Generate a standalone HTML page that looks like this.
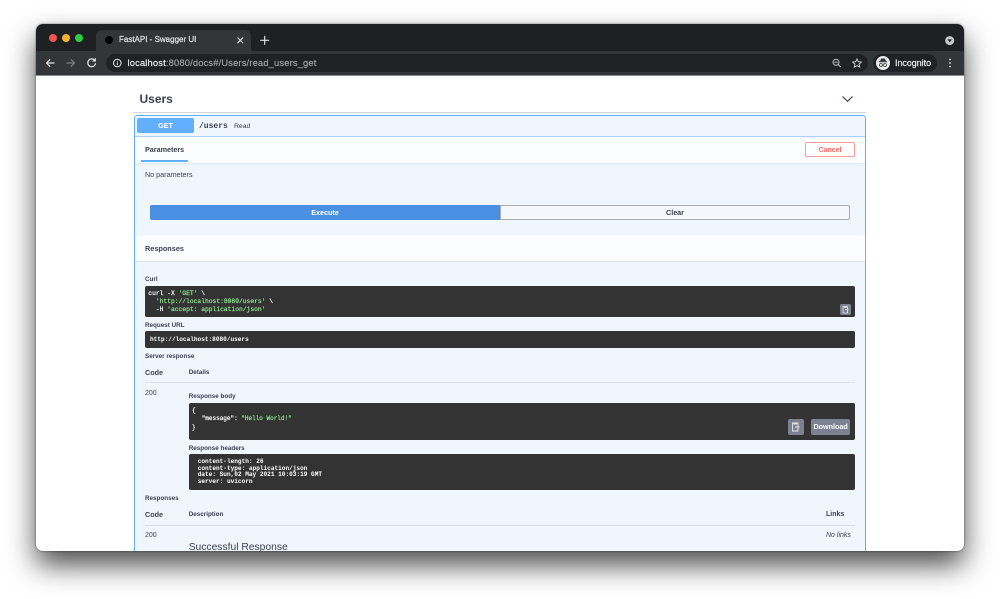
<!DOCTYPE html>
<html><head><meta charset="utf-8"><style>
html,body{margin:0;padding:0;background:#fff;width:1000px;height:599px;overflow:hidden}
*{box-sizing:border-box}
body{font-family:"Liberation Sans",sans-serif;position:relative}
.a{position:absolute;white-space:nowrap}
#win{position:absolute;left:36px;top:24px;width:928px;height:527px;border-radius:7px;box-shadow:0 14px 28px rgba(0,0,0,.7),0 0 2px rgba(0,0,0,.5);background:#fff;overflow:hidden}
.m{font-family:"Liberation Mono",monospace}
.b{font-weight:bold}
.dark{position:absolute;background:#333;border-radius:2px}
.g{color:#8fe88f}
.lab{position:absolute;white-space:nowrap;font-size:6.300px;font-weight:bold;color:#3b4151}
.st{-webkit-text-stroke:.2px currentColor}
</style></head><body>
<div id="win">
<div class="a" style="left:0;top:0;width:928px;height:27px;background:#1f2023"></div>
<div class="a" style="left:0;top:27px;width:928px;height:24px;background:#323639"></div>
<div class="a" style="left:0;top:51px;width:928px;height:1px;background:#8b8d90"></div>
<div class="a" style="left:13.300px;top:10px;width:8px;height:8px;border-radius:50%;background:#f4524d"></div>
<div class="a" style="left:26.300px;top:10px;width:8px;height:8px;border-radius:50%;background:#f5b12e"></div>
<div class="a" style="left:39.300px;top:10px;width:8px;height:8px;border-radius:50%;background:#2ccb41"></div>
<div class="a" style="left:60px;top:5.500px;width:155px;height:22px;background:#323639;border-radius:6px 6px 0 0"></div>
<div class="a" style="left:68.700px;top:12px;width:8px;height:8px;border-radius:50%;background:#000"></div>
<div class="a st" style="left:83px;top:10px;font-size:8px;line-height:12px;color:#e0e2e4">FastAPI - Swagger UI</div>
<div class="a" style="left:70px;top:30px;width:762px;height:18px;background:#202124;border-radius:9px"></div>
<div class="a" style="left:837px;top:30px;width:64px;height:18px;background:#202124;border-radius:9px"></div>
<svg class="a" style="left:0;top:0" width="928" height="52" fill="none" stroke-linecap="round">
<path d="M201.800 13.800l5 5M206.800 13.800l-5 5" stroke="#dfe1e3" stroke-width="1.100"/>
<path d="M228.700 12.300v8M224.700 16.300h8" stroke="#dfe1e3" stroke-width="1.200"/>
<path d="M10.500 39h7.500M10.500 39l3.300-3.300M10.500 39l3.300 3.300" stroke="#dfe1e3" stroke-width="1.200"/>
<path d="M31 39h7.500M38.500 39l-3.300-3.300M38.500 39l-3.300 3.300" stroke="#7b7e82" stroke-width="1.200"/>
<path d="M58.700 36.300a3.900 3.900 0 1 0 .8 3.400" stroke="#dfe1e3" stroke-width="1.200"/>
<path d="M59.600 34.300v3.100h-3.100z" fill="#dfe1e3" stroke="#dfe1e3" stroke-width=".5"/>
<circle cx="81.300" cy="39" r="3.800" stroke="#e8eaed" stroke-width="1"/>
<path d="M81.300 38.700v2.200M81.300 37.200v.1" stroke="#e8eaed" stroke-width="1"/>
<circle cx="800" cy="38.300" r="3" stroke="#c5c7ca" stroke-width="1"/>
<path d="M802.200 40.500l2.300 2.300M798.700 38.300h2.600" stroke="#c5c7ca" stroke-width="1"/>
<path d="M821 34.800l1.300 2.900 3.200.3-2.400 2.100.7 3.100-2.800-1.600-2.800 1.600.7-3.100-2.400-2.100 3.200-.3z" stroke="#c5c7ca" stroke-width="1" stroke-linejoin="round"/>
<circle cx="913.700" cy="16.600" r="4.500" fill="#c5c7ca"/>
<path d="M911.500 15.400h4.400l-2.200 3z" fill="#1f2023"/>
<circle cx="914" cy="35.500" r=".9" fill="#dfe1e3"/><circle cx="914" cy="39" r=".9" fill="#dfe1e3"/><circle cx="914" cy="42.500" r=".9" fill="#dfe1e3"/>
</svg>
<div class="a st" style="left:91.500px;top:33px;font-size:9.300px;line-height:12px;color:#9ea1a5;letter-spacing:.02em"><span style="color:#e8eaed">localhost</span>:8080/docs#/Users/read_users_get</div>
<div class="a" style="left:840px;top:32px;width:14px;height:14px;border-radius:50%;background:#eceded"></div>
<svg class="a" style="left:840px;top:32px" width="14" height="14" fill="none"><path d="M4.500 4l.6-1.500h3.800L9.500 4l.5 1.200H4z" fill="#333"/><path d="M2.800 5.800h8.400" stroke="#333"/><circle cx="5" cy="9" r="1.500" stroke="#333" stroke-width=".8"/><circle cx="9" cy="9" r="1.500" stroke="#333" stroke-width=".8"/></svg>
<div class="a st" style="left:859px;top:33px;font-size:8.900px;line-height:12px;color:#e8eaed">Incognito</div>
</div>

<!-- content -->
<div class="a b" style="left:139.500px;top:92px;font-size:12px;line-height:15px;color:#3b4151">Users</div>
<div class="a" style="left:134px;top:112px;width:732px;height:1px;background:#d4d6da"></div>
<svg class="a" style="left:841px;top:94px" width="13" height="10" fill="none"><path d="M1.500 2.500L6.500 7.300 11.500 2.500" stroke="#3b4151" stroke-width="1.200"/></svg>

<div class="a" style="left:134px;top:115px;width:732px;height:436px;background:#eff6fe;border:1px solid #61affe;border-bottom:0;border-radius:3px 3px 0 0;overflow:hidden"></div>
<div class="a" style="left:135px;top:135.500px;width:730px;height:1px;background:#a8d1fb"></div>
<div class="a b" style="left:137px;top:118px;width:57px;height:15px;background:#61affe;border-radius:2px;color:#fff;font-size:7.200px;line-height:15px;text-align:center">GET</div>
<div class="a m b" style="left:199px;top:120.500px;font-size:8px;line-height:12px;color:#3b4151">/users</div>
<div class="a" style="left:234px;top:120.500px;font-size:6.800px;line-height:12px;color:#3b4151">Read</div>

<div class="a" style="left:135px;top:136.500px;width:730px;height:26px;background:#fbfdff;box-shadow:0 1px 2px rgba(0,0,0,.08)"></div>
<div class="a b" style="left:145px;top:143.500px;font-size:7.200px;line-height:12px;color:#3b4151">Parameters</div>
<div class="a" style="left:141.300px;top:160px;width:47px;height:1.500px;background:#61affe"></div>
<div class="a b" style="left:805px;top:142px;width:50px;height:15px;border:1px solid #ff9a9a;border-radius:2px;background:#fff;color:#ff6b6b;font-size:7px;line-height:15px;text-align:center">Cancel</div>
<div class="a" style="left:145px;top:169px;font-size:7.200px;line-height:12px;color:#3b4151">No parameters</div>

<div class="a b" style="left:150px;top:205px;width:350px;height:15px;background:#4990e2;border-radius:2px 0 0 2px;color:#fff;font-size:7.200px;line-height:16.500px;text-align:center">Execute</div>
<div class="a b" style="left:500px;top:205px;width:350px;height:15px;background:#f4f7fb;border:1px solid #a9abae;border-radius:0 2px 2px 0;color:#3b4151;font-size:7.200px;line-height:14.500px;text-align:center">Clear</div>

<div class="a" style="left:135px;top:235px;width:730px;height:26.500px;background:#fafcff;border-bottom:1px solid #dfe3e8"></div>
<div class="a b" style="left:145px;top:242.500px;font-size:7.300px;line-height:12px;color:#3b4151">Responses</div>

<div class="lab" style="left:145px;top:275px;line-height:9px">Curl</div>
<div class="dark" style="left:145px;top:286px;width:710px;height:31px"></div>
<div class="a m st" style="left:148.300px;top:289.500px;font-size:6.300px;line-height:8.300px;color:#fff;white-space:pre">curl -X <span class="g">'GET'</span> \
  <span class="g">'http://localhost:8080/users'</span> \
  -H <span class="g">'accept: application/json'</span></div>
<div class="a" style="left:839.500px;top:304px;width:11px;height:11px;border-radius:1.500px;background:#7d8293"></div>
<svg class="a" style="left:839.500px;top:304px" width="11" height="11" fill="none"><path d="M3 2.500h4.500v6.500H3zM4.300 2v1.300h2V2M5 5.500h3.500" stroke="#e8e8ea" stroke-width=".8"/></svg>

<div class="lab" style="left:145px;top:320.500px;line-height:9px">Request URL</div>
<div class="dark" style="left:145px;top:331px;width:710px;height:17px"></div>
<div class="a m b" style="left:150px;top:335px;font-size:6.100px;line-height:9px;color:#fff">http://localhost:8080/users</div>
<div class="lab" style="left:145px;top:351.500px;line-height:9px">Server response</div>

<div class="a b" style="left:145px;top:367.500px;font-size:7.200px;line-height:10px;color:#3b4151">Code</div>
<div class="lab" style="left:188.700px;top:367.500px;line-height:9px;font-size:6.300px">Details</div>
<div class="a" style="left:145px;top:382px;width:710px;height:1px;background:#dde2e8"></div>

<div class="a" style="left:145px;top:388.500px;font-size:7px;line-height:10px;color:#3b4151">200</div>
<div class="lab" style="left:188.700px;top:392px;line-height:9px">Response body</div>
<div class="dark" style="left:189px;top:403px;width:666px;height:37px"></div>
<div class="a m st" style="left:192px;top:406.500px;font-size:6px;line-height:8.650px;color:#fff;white-space:pre">{
<span style="margin-left:9.700px">"message": <span class="g">"Hello World!"</span></span>
}</div>
<div class="a" style="left:788.300px;top:419.300px;width:15.400px;height:15.400px;border-radius:2px;background:#7d8293"></div>
<svg class="a" style="left:788.300px;top:419.300px" width="16" height="16" fill="none"><path d="M4.500 4h5.500v8H4.500zM6 3.500v1.500h2.500V3.500M7 8h4.500" stroke="#e8e8ea" stroke-width=".9"/></svg>
<div class="a b" style="left:811.300px;top:419.300px;width:38.700px;height:15.400px;border-radius:2px;background:#7d8293;color:#fff;font-size:7.200px;line-height:16px;text-align:center">Download</div>

<div class="lab" style="left:188.700px;top:444px;line-height:9px">Response headers</div>
<div class="dark" style="left:189px;top:454px;width:666px;height:36px"></div>
<div class="a m b" style="left:197.700px;top:459px;font-size:6.100px;line-height:6.550px;color:#fff;white-space:pre">content-length: 26
content-type: application/json
date: Sun,02 May 2021 10:03:19 GMT
server: uvicorn</div>

<div class="lab" style="left:145px;top:494px;line-height:9px">Responses</div>
<div class="a b" style="left:145px;top:510px;font-size:7.200px;line-height:10px;color:#3b4151">Code</div>
<div class="lab" style="left:188.700px;top:510px;line-height:9px;font-size:6.300px">Description</div>
<div class="lab" style="left:826px;top:510px;line-height:10px;font-size:7px">Links</div>
<div class="a" style="left:145px;top:525px;width:710px;height:1px;background:#d5dbe2"></div>
<div class="a" style="left:145px;top:531px;font-size:7px;line-height:10px;color:#3b4151">200</div>
<div class="a" style="left:826px;top:531px;font-size:7px;line-height:10px;font-style:italic;color:#3b4151">No links</div>
<div class="a" style="left:188.700px;top:540.500px;height:10.500px;overflow:hidden;font-size:10.300px;line-height:14px;color:#3b4151">Successful Response</div>
</body></html>
